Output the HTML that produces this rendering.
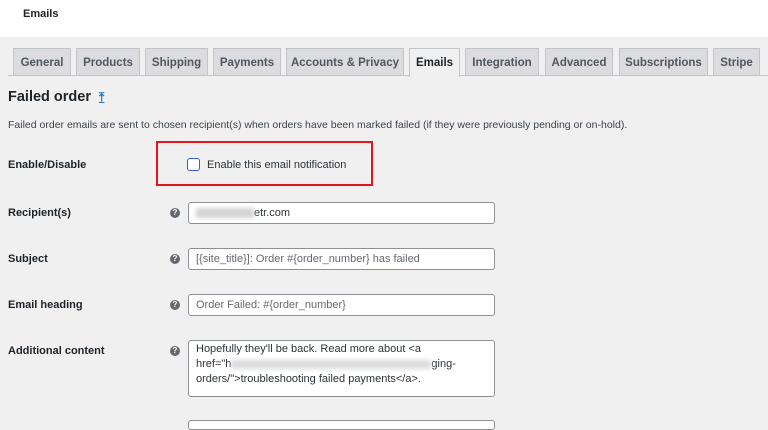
<!DOCTYPE html><html><head><style>
body{margin:0;width:768px;height:423px;overflow:hidden;background:#f0f0f1;font-family:"Liberation Sans",sans-serif;color:#1d2327;position:relative}
.top{position:absolute;left:0;top:0;width:768px;height:37px;background:#fff}
.top span{position:absolute;left:23px;top:8px;font-size:11px;font-weight:bold}
.tab{position:absolute;top:48px;height:27px;background:#dcdcde;border:1px solid #c3c4c7;border-bottom:none;box-sizing:border-box;font-size:11.5px;font-weight:bold;color:#50575e;text-align:center;line-height:28px}
.tab.a{background:#f0f0f1;color:#1d2327;height:29px}
.line{position:absolute;left:8px;right:0;top:75px;border-top:1px solid #c3c4c7}
.abs{position:absolute}
.lbl{position:absolute;left:8px;font-size:11px;font-weight:bold}
.help{position:absolute;left:170px;width:10px;height:10px;border-radius:50%;background:#646970;color:#fff;font-size:8px;font-weight:bold;text-align:center;line-height:10px}
.inp{position:absolute;left:188px;width:307px;height:22px;background:#fff;border:1px solid #8c8f94;border-radius:3px;box-sizing:border-box;font-size:11px;padding:0 7px;line-height:20px;color:#646970}
</style></head><body>
<div class="top"><span>Emails</span></div>
<div class="tab" style="left:13px;width:58px">General</div>
<div class="tab" style="left:76px;width:64px">Products</div>
<div class="tab" style="left:145px;width:63px">Shipping</div>
<div class="tab" style="left:213px;width:68px">Payments</div>
<div class="tab" style="left:286px;width:118px">Accounts &amp; Privacy</div>
<div class="line"></div>
<div class="tab a" style="left:409px;width:51px">Emails</div>
<div class="tab" style="left:465px;width:74px">Integration</div>
<div class="tab" style="left:545px;width:68px">Advanced</div>
<div class="tab" style="left:619px;width:89px">Subscriptions</div>
<div class="tab" style="left:713px;width:47px">Stripe</div>
<div class="abs" style="left:8px;top:89px;font-size:14.5px;font-weight:bold">Failed order <span style="color:#2271b1;font-size:12px;margin-left:4px;text-decoration:underline">⤒</span></div>
<div class="abs" style="left:8px;top:119px;font-size:10.5px;color:#3c434a">Failed order emails are sent to chosen recipient(s) when orders have been marked failed (if they were previously pending or on-hold).</div>
<div class="lbl" style="top:159px">Enable/Disable</div>
<div class="abs" style="left:156px;top:141px;width:217px;height:45px;border:2px solid #e8141b;box-sizing:border-box"></div>
<div class="abs" style="left:187px;top:158px;width:13px;height:13px;border:1.5px solid #3858e9;border-radius:3px;box-sizing:border-box;background:#fff"></div>
<div class="abs" style="left:207px;top:159px;font-size:11px;color:#2c3338">Enable this email notification</div>
<div class="lbl" style="top:207px">Recipient(s)</div><div class="help" style="top:208px">?</div>
<div class="inp" style="top:202px;color:#2c3338"><span style="display:inline-block;width:58px;height:10px;background:#d4d4d6;filter:blur(2px);vertical-align:middle"></span>etr.com</div>
<div class="lbl" style="top:253px">Subject</div><div class="help" style="top:254px">?</div>
<div class="inp" style="top:248px">[{site_title}]: Order #{order_number} has failed</div>
<div class="lbl" style="top:299px">Email heading</div><div class="help" style="top:300px">?</div>
<div class="inp" style="top:294px">Order Failed: #{order_number}</div>
<div class="lbl" style="top:345px">Additional content</div><div class="help" style="top:346px">?</div>
<div class="inp" style="top:340px;height:57px;color:#2c3338;line-height:15px;padding-top:1px">Hopefully they'll be back. Read more about &lt;a<br>href="h<span style="display:inline-block;width:200px;height:9px;background:#dcdcde;filter:blur(2px);vertical-align:middle"></span>ging-<br>orders/"&gt;troubleshooting failed payments&lt;/a&gt;.</div>
<div class="inp" style="top:420px;height:10px"></div>
</body></html>
